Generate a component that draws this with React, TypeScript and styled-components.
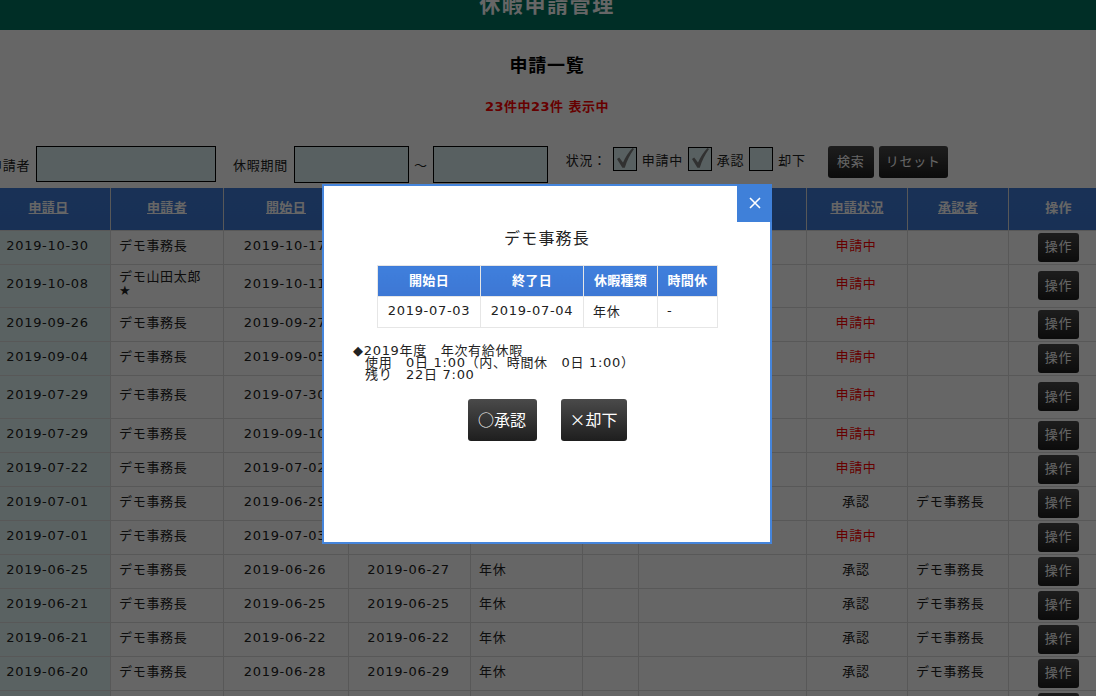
import styled, { createGlobalStyle } from "styled-components";

const GlobalStyle = createGlobalStyle`
  html, body {
    margin: 0;
    height: 696px;
    overflow: hidden;
    background: #fff;
  }
  body {
    font-family: "DejaVu Sans", "Noto Sans CJK JP", sans-serif;
    font-size: 13px;
    letter-spacing: 0.7px;
    color: #222;
  }
`;

const Page = styled.div`
  width: 1122px;
  margin-left: -14px;
`;
const Header = styled.header`
  height: 30px;
  background: #007360;
  overflow: hidden;
  text-align: center;
`;
const SiteTitle = styled.h1`
  margin: 0;
  font-size: 21px;
  line-height: 10px;
  letter-spacing: 1.6px;
  color: #fff;
`;
const PageTitle = styled.h2`
  margin: 24px 0 0;
  font-size: 18px;
  line-height: 24px;
  letter-spacing: 0.7px;
  text-align: center;
  color: #000;
`;
const Count = styled.p`
  margin: 19px 0 0;
  font-size: 13px;
  font-weight: bold;
  line-height: 20px;
  letter-spacing: 0.5px;
  text-align: center;
  color: #f00;
`;
const Filter = styled.form`
  display: flex;
  align-items: flex-start;
  height: 42px;
  margin: 29px 0 0;
  padding-left: 3px;
`;
const FilterGroup = styled.div<{ $gap: number; $left?: number; $top?: number }>`
  display: flex;
  align-items: center;
  gap: ${p => p.$gap}px;
  margin-left: ${p => p.$left ?? 0}px;
  margin-top: ${p => p.$top ?? 0}px;
`;
const FilterLabel = styled.label`
  white-space: nowrap;
`;
const Wave = styled.span`
  margin: 0 -1px;
`;
const StatusLabel = styled(FilterLabel)`
  margin-right: 1px;
`;
const TextBox = styled.div<{ $w: number; $h: number }>`
  width: ${p => p.$w}px;
  height: ${p => p.$h}px;
  box-sizing: border-box;
  border: 1.5px solid #000;
  background: #dcf0f2;
`;
const CheckBox = styled.span`
  display: flex;
  width: 24px;
  height: 24px;
  box-sizing: border-box;
  border: 1.5px solid #000;
  background: #dcf0f2;
`;
const DarkButton = styled.button`
  border: 0;
  border-radius: 3px;
  background: linear-gradient(#4a4a4a, #1e1e1e);
  color: #fff;
  font: inherit;
  letter-spacing: inherit;
  padding: 0;
  cursor: pointer;
`;
const SearchButton = styled(DarkButton)<{ $w: number }>`
  width: ${p => p.$w}px;
  height: 32px;
  padding-bottom: 4px;
`;

const Table = styled.table`
  width: 1122px;
  table-layout: fixed;
  border-collapse: collapse;
`;
const HeadCell = styled.th`
  height: 36px;
  padding: 0 0 6px;
  border: 1px solid #ddd;
  border-width: 0 1px;
  background: linear-gradient(#3f7bd8, #3d78d4);
  color: #fff;
  font-weight: bold;
  letter-spacing: 0.3px;
`;
const SortLink = styled.a`
  color: #fff;
  text-decoration: underline;
`;
const Row = styled.tr<{ $tall?: boolean }>`
  height: ${p => (p.$tall ? 43 : 34)}px;
`;
const Cell = styled.td<{ $center?: boolean; $sorted?: boolean; $pending?: boolean }>`
  padding: 0 10px 4px 8px;
  border: 1px solid #ddd;
  line-height: 14px;
  text-align: ${p => (p.$center ? "center" : "left")};
  background: ${p => (p.$sorted ? "#e2f6f5" : "transparent")};
  color: ${p => (p.$pending ? "#f00" : "#222")};
  white-space: normal;
  overflow: hidden;
`;
const ActionCell = styled.td`
  padding: 0 0 1px;
  border: 1px solid #ddd;
  text-align: center;
`;
const ActionButton = styled(DarkButton)`
  display: block;
  width: 41px;
  height: 29px;
  margin: 0 auto;
  padding-bottom: 3px;
`;

const Overlay = styled.div`
  position: fixed;
  inset: 0;
  background: rgba(0, 0, 0, 0.6);
`;
const Modal = styled.div`
  position: absolute;
  left: 322px;
  top: 184px;
  width: 450px;
  height: 360px;
  box-sizing: border-box;
  border: 2px solid #4585dc;
  background: #fff;
  padding: 41px 30px 0;
`;
const CloseButton = styled.button`
  position: absolute;
  top: -2px;
  right: -2px;
  width: 35px;
  height: 38px;
  border: 0;
  padding: 0;
  background: #3f80d9;
  display: flex;
  align-items: center;
  justify-content: center;
`;
const ModalTitle = styled.h3`
  margin: 0;
  font-size: 16px;
  font-weight: normal;
  line-height: 24px;
  letter-spacing: 1.2px;
  text-align: center;
  color: #222;
`;
const ModalTable = styled.table`
  width: 340px;
  margin: 14px 0 0 23px;
  table-layout: fixed;
  border-collapse: collapse;
`;
const ModalHead = styled.th`
  height: 27px;
  padding: 0 0 3px;
  border: 1px solid #e6e6e6;
  background: linear-gradient(#3f7fdc, #3d77d4);
  color: #fff;
  font-weight: bold;
  letter-spacing: 0.3px;
`;
const ModalCell = styled.td<{ $center?: boolean }>`
  height: 26px;
  padding: 0 9px 4px;
  border: 1px solid #e6e6e6;
  text-align: ${p => (p.$center ? "center" : "left")};
`;
const Notes = styled.p`
  margin: 17px 0 0 -1px;
  padding-left: 12px;
  text-indent: -12px;
  line-height: 12px;
  color: #222;
  letter-spacing: 0.7px;
`;
const ModalActions = styled.div`
  display: flex;
  justify-content: center;
  gap: 24px;
  margin-top: 18px;
`;
const ModalButton = styled(DarkButton)<{ $w: number }>`
  width: ${p => p.$w}px;
  height: 42px;
  font-family: "Noto Sans CJK JP", sans-serif;
  font-size: 16px;
  letter-spacing: 0;
  padding-bottom: 2px;
`;

type Leave = {
  applied: string;
  name: string;
  start: string;
  end: string;
  kind: string;
  hourly?: string;
  status: string;
  approver?: string;
  tall?: boolean;
};

const leaves: Leave[] = [
  { applied: "2019-10-30", name: "デモ事務長", start: "2019-10-17", end: "2019-10-18", kind: "年休", status: "申請中" },
  { applied: "2019-10-08", name: "デモ山田太郎★", start: "2019-10-11", end: "2019-10-11", kind: "年休", status: "申請中", tall: true },
  { applied: "2019-09-26", name: "デモ事務長", start: "2019-09-27", end: "2019-09-27", kind: "年休", status: "申請中" },
  { applied: "2019-09-04", name: "デモ事務長", start: "2019-09-05", end: "2019-09-05", kind: "年休", status: "申請中" },
  { applied: "2019-07-29", name: "デモ事務長", start: "2019-07-30", end: "2019-07-30", kind: "年休", status: "申請中", tall: true },
  { applied: "2019-07-29", name: "デモ事務長", start: "2019-09-10", end: "2019-09-10", kind: "年休", status: "申請中" },
  { applied: "2019-07-22", name: "デモ事務長", start: "2019-07-02", end: "2019-07-02", kind: "年休", status: "申請中" },
  { applied: "2019-07-01", name: "デモ事務長", start: "2019-06-29", end: "2019-06-29", kind: "年休", status: "承認", approver: "デモ事務長" },
  { applied: "2019-07-01", name: "デモ事務長", start: "2019-07-03", end: "2019-07-04", kind: "年休", hourly: "-", status: "申請中" },
  { applied: "2019-06-25", name: "デモ事務長", start: "2019-06-26", end: "2019-06-27", kind: "年休", status: "承認", approver: "デモ事務長" },
  { applied: "2019-06-21", name: "デモ事務長", start: "2019-06-25", end: "2019-06-25", kind: "年休", status: "承認", approver: "デモ事務長" },
  { applied: "2019-06-21", name: "デモ事務長", start: "2019-06-22", end: "2019-06-22", kind: "年休", status: "承認", approver: "デモ事務長" },
  { applied: "2019-06-20", name: "デモ事務長", start: "2019-06-28", end: "2019-06-29", kind: "年休", status: "承認", approver: "デモ事務長" },
  { applied: "2019-06-19", name: "デモ事務長", start: "2019-06-20", end: "2019-06-20", kind: "年休", status: "承認", approver: "デモ事務長" },
];

const columnWidths = [124, 113, 125, 122, 112, 56, 168, 101, 101, 100];

function Tick() {
  return (
    <svg width="21" height="21" viewBox="0 0 21 21">
      <path d="M3 11 L5.2 9.6 L9 14.6 C11.5 9 14.5 4 18.5 0 L20 1 C16 6.5 13 12.5 10.8 19.8 L8.4 19.8 Z" fill="#7c7c7c" />
    </svg>
  );
}

function App() {
  return (
    <>
      <GlobalStyle />
      <Page>
        <Header>
          <SiteTitle>休暇申請管理</SiteTitle>
        </Header>
        <PageTitle>申請一覧</PageTitle>
        <Count>23件中23件 表示中</Count>
        <Filter>
          <FilterGroup $gap={6}>
            <FilterLabel>申請者</FilterLabel>
            <TextBox $w={180} $h={36} />
          </FilterGroup>
          <FilterGroup $gap={6} $left={17}>
            <FilterLabel>休暇期間</FilterLabel>
            <TextBox $w={115} $h={37} />
            <Wave>～</Wave>
            <TextBox $w={115} $h={37} />
          </FilterGroup>
          <FilterGroup $gap={5} $left={18} $top={1}>
            <StatusLabel>状況：</StatusLabel>
            <CheckBox><Tick /></CheckBox>
            <FilterLabel>申請中</FilterLabel>
            <CheckBox><Tick /></CheckBox>
            <FilterLabel>承認</FilterLabel>
            <CheckBox />
            <FilterLabel>却下</FilterLabel>
          </FilterGroup>
          <FilterGroup $gap={5} $left={22}>
            <SearchButton $w={46}>検索</SearchButton>
            <SearchButton $w={69}>リセット</SearchButton>
          </FilterGroup>
        </Filter>
        <Table>
          <colgroup>
            {columnWidths.map((w, i) => (
              <col key={i} width={w} />
            ))}
          </colgroup>
          <thead>
            <tr>
              {["申請日", "申請者", "開始日", "終了日", "休暇種類", "時間休", "備考", "申請状況", "承認者"].map(h => (
                <HeadCell key={h}>
                  <SortLink href="#">{h}</SortLink>
                </HeadCell>
              ))}
              <HeadCell>操作</HeadCell>
            </tr>
          </thead>
          <tbody>
            {leaves.map((l, i) => (
              <Row key={i} $tall={l.tall}>
                <Cell $center $sorted>{l.applied}</Cell>
                <Cell>{l.name}</Cell>
                <Cell $center>{l.start}</Cell>
                <Cell $center>{l.end}</Cell>
                <Cell>{l.kind}</Cell>
                <Cell>{l.hourly}</Cell>
                <Cell />
                <Cell $center $pending={l.status === "申請中"}>{l.status}</Cell>
                <Cell>{l.approver}</Cell>
                <ActionCell>
                  <ActionButton>操作</ActionButton>
                </ActionCell>
              </Row>
            ))}
          </tbody>
        </Table>
      </Page>
      <Overlay>
        <Modal>
          <CloseButton aria-label="閉じる">
            <svg width="12" height="12" viewBox="0 0 12 12">
              <path d="M1 1 L11 11 M11 1 L1 11" stroke="#fff" strokeWidth="1.6" />
            </svg>
          </CloseButton>
          <ModalTitle>デモ事務長</ModalTitle>
          <ModalTable>
            <colgroup>
              <col width={103} />
              <col width={103} />
              <col width={74} />
              <col width={60} />
            </colgroup>
            <thead>
              <tr>
                <ModalHead>開始日</ModalHead>
                <ModalHead>終了日</ModalHead>
                <ModalHead>休暇種類</ModalHead>
                <ModalHead>時間休</ModalHead>
              </tr>
            </thead>
            <tbody>
              <tr>
                <ModalCell $center>2019-07-03</ModalCell>
                <ModalCell $center>2019-07-04</ModalCell>
                <ModalCell>年休</ModalCell>
                <ModalCell>-</ModalCell>
              </tr>
            </tbody>
          </ModalTable>
          <Notes>
            ◆2019年度　年次有給休暇
            <br />
            使用　0日 1:00（内、時間休　0日 1:00）
            <br />
            残り　22日 7:00
          </Notes>
          <ModalActions>
            <ModalButton $w={69}>○承認</ModalButton>
            <ModalButton $w={66}>×却下</ModalButton>
          </ModalActions>
        </Modal>
      </Overlay>
    </>
  );
}

export default App;
